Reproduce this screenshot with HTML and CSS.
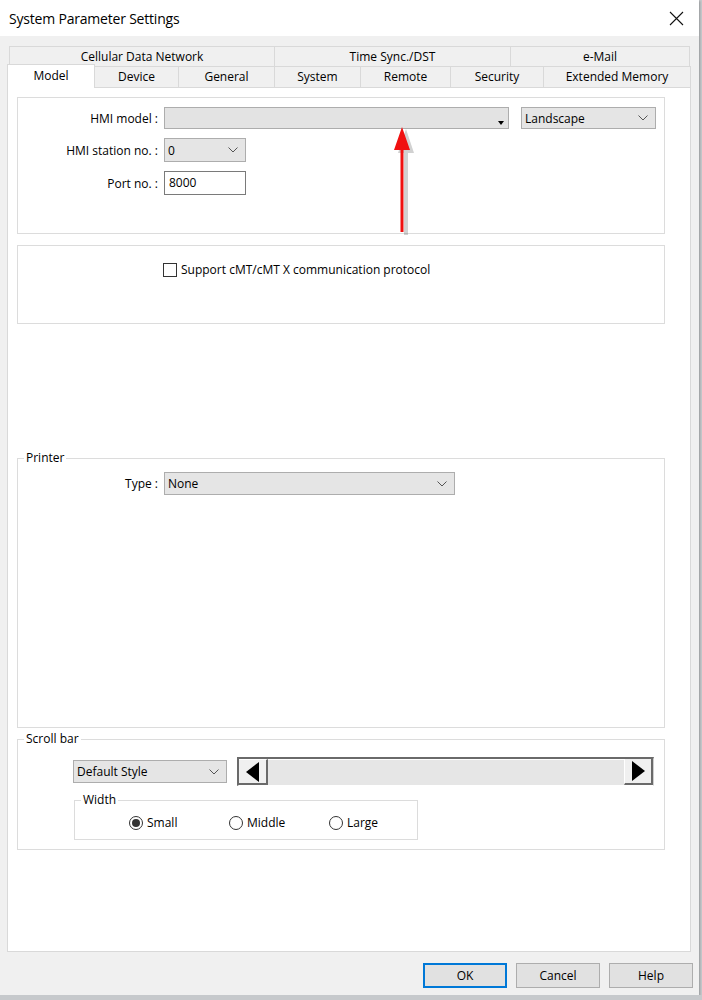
FILE: index.html
```html
<!DOCTYPE html>
<html lang="en">
  <head>
    <meta charset="UTF-8" />
    <meta name="viewport" content="width=device-width, initial-scale=1.0" />
    <title>System Parameter Settings</title>
    <link rel="stylesheet" href="styles.css">
  </head>
  <body>
    <div class="dialog">
      <div class="titlebar">
        <span class="title">System Parameter Settings</span>
        <svg class="close" width="15" height="15" viewBox="0 0 15 15">
          <path d="M1 1 L14 14 M14 1 L1 14" stroke="#111" stroke-width="1.1" fill="none" />
        </svg>
      </div>

      <div class="content">
        <div class="tabs">
          <div class="tab-row back">
            <div class="tab" style="width: 266px">Cellular Data Network</div>
            <div class="tab" style="width: 237px">Time Sync./DST</div>
            <div class="tab" style="width: 180px">e-Mail</div>
          </div>
          <div class="tab-row front">
            <div class="tab active" style="width: 88px">Model</div>
            <div class="tab" style="width: 85px">Device</div>
            <div class="tab" style="width: 97px">General</div>
            <div class="tab" style="width: 87px">System</div>
            <div class="tab" style="width: 91px">Remote</div>
            <div class="tab" style="width: 94px">Security</div>
            <div class="tab" style="width: 148px">Extended Memory</div>
          </div>
        </div>

        <div class="panel">
          <fieldset class="group model-group">
            <div class="form">
              <span class="label">HMI model :</span>
              <div class="field-line">
                <div class="combo model-combo">
                  <svg class="tiny-drop" width="6" height="4" viewBox="0 0 6 4">
                    <path d="M0 0 H6 L3 4 Z" fill="#000" />
                  </svg>
                </div>
                <div class="combo orient-combo">
                  <span>Landscape</span>
                  <svg class="chev" width="10" height="6" viewBox="0 0 10 6">
                    <path d="M0.5 0.5 L5 5 L9.5 0.5" stroke="#555" fill="none" />
                  </svg>
                </div>
              </div>

              <span class="label">HMI station no. :</span>
              <div class="field-line">
                <div class="combo small-combo">
                  <span>0</span>
                  <svg class="chev" width="10" height="6" viewBox="0 0 10 6">
                    <path d="M0.5 0.5 L5 5 L9.5 0.5" stroke="#555" fill="none" />
                  </svg>
                </div>
              </div>

              <span class="label">Port no. :</span>
              <div class="field-line">
                <div class="textbox">8000</div>
              </div>
            </div>
          </fieldset>

          <fieldset class="group protocol-group">
            <label class="check">
              <span class="box"></span>
              <span>Support cMT/cMT X communication protocol</span>
            </label>
          </fieldset>

          <fieldset class="group printer-group">
            <legend>Printer</legend>
            <div class="form">
              <span class="label">Type :</span>
              <div class="field-line">
                <div class="combo type-combo">
                  <span>None</span>
                  <svg class="chev" width="10" height="6" viewBox="0 0 10 6">
                    <path d="M0.5 0.5 L5 5 L9.5 0.5" stroke="#555" fill="none" />
                  </svg>
                </div>
              </div>
            </div>
          </fieldset>

          <fieldset class="group scroll-group">
            <legend>Scroll bar</legend>
            <div class="scroll-body">
              <div class="scroll-line">
                <div class="combo style-combo">
                  <span>Default Style</span>
                  <svg class="chev" width="10" height="6" viewBox="0 0 10 6">
                    <path d="M0.5 0.5 L5 5 L9.5 0.5" stroke="#555" fill="none" />
                  </svg>
                </div>
                <div class="scroll-preview">
                  <div class="arrow-btn left">
                    <svg width="14" height="20" viewBox="0 0 14 20">
                      <path d="M13 0 V20 L0 10 Z" fill="#000" />
                    </svg>
                  </div>
                  <div class="track"></div>
                  <div class="arrow-btn right">
                    <svg width="14" height="20" viewBox="0 0 14 20">
                      <path d="M1 0 V20 L14 10 Z" fill="#000" />
                    </svg>
                  </div>
                </div>
              </div>
              <fieldset class="group width-group">
                <legend>Width</legend>
                <div class="radios">
                  <label class="radio"><span class="dot on"></span>Small</label>
                  <label class="radio"><span class="dot"></span>Middle</label>
                  <label class="radio"><span class="dot"></span>Large</label>
                </div>
              </fieldset>
            </div>
          </fieldset>
        </div>

        <div class="buttons">
          <button class="btn default">OK</button>
          <button class="btn">Cancel</button>
          <button class="btn">Help</button>
        </div>
      </div>

      <!-- annotation arrow -->
      <svg class="pointer" width="26" height="112" viewBox="0 0 26 112">
        <path d="M12 2 L20 26 H14 V108 H10 V26 H4 Z" fill="#000" opacity="0.18" transform="translate(2 2)" />
        <path d="M10 2 L18 25 H11.5 V107 H8.5 V25 H2 Z" fill="#f01010" />
      </svg>
    </div>
  </body>
</html>
```

FILE: styles.css
```css
body {
  margin: 0;
  background-color: #c6c9cc;
  font-family: "Open Sans", "Liberation Sans", sans-serif;
  font-size: 12px;
  color: #000;
}
.dialog {
  position: relative;
  width: 699px;
  height: 995px;
  background-color: #f0f0f0;
  display: flex;
  flex-direction: column;
  box-shadow: 1px 1px 2px rgba(0, 0, 0, 0.25);
}
.titlebar {
  height: 36px;
  flex: 0 0 36px;
  background-color: #fff;
  display: flex;
  align-items: center;
  justify-content: space-between;
  padding: 0 15px 0 9px;
}
.title {
  font-size: 14px;
  letter-spacing: -0.2px;
}
.content {
  padding: 10px 0 0 7px;
}

/* tabs */
.tab-row {
  display: flex;
}
.tab-row.back {
  margin-left: 2px;
  height: 21px;
}
.tab-row.front {
  position: relative;
  z-index: 1;
  height: 24px;
  margin-top: -3px;
  margin-bottom: -1px;
}
.tab {
  box-sizing: border-box;
  height: 21px;
  margin-left: -1px;
  border: 1px solid #d9d9d9;
  background-color: #f0f0f0;
  text-align: center;
  line-height: 20px;
}
.tab:first-child {
  margin-left: 0;
}
.tab-row.front .tab {
  margin-top: 2px;
  border-bottom: none;
}
.tab-row.front .tab.active {
  height: 24px;
  margin-top: 0;
  background-color: #fff;
  line-height: 22px;
}

/* page */
.panel {
  box-sizing: border-box;
  width: 684px;
  height: 865px;
  border: 1px solid #d9d9d9;
  background-color: #fff;
  padding: 9px 25px 0 9px;
}
.group {
  margin: 0;
  padding: 0;
  border: 1px solid #dcdcdc;
  min-width: 0;
}
.group legend {
  margin-left: 6px;
  padding: 0 2px;
  line-height: 14px;
}
.model-group {
  height: 137px;
  box-sizing: border-box;
  padding-top: 9px;
}
.form {
  display: grid;
  grid-template-columns: 140px 1fr;
  column-gap: 6px;
  row-gap: 9px;
  align-items: center;
}
.label {
  text-align: right;
}
.field-line {
  display: flex;
  align-items: center;
  gap: 12px;
}
.combo {
  box-sizing: border-box;
  position: relative;
  height: 23px;
  border: 1px solid #adadad;
  background-color: #e5e5e5;
  display: flex;
  align-items: center;
  justify-content: space-between;
  padding: 0 7px 0 3px;
}
.model-combo {
  width: 345px;
  height: 22px;
  background-color: #e3e3e3;
}
.tiny-drop {
  position: absolute;
  right: 4px;
  bottom: 3px;
}
.orient-combo {
  width: 135px;
  height: 22px;
}
.small-combo {
  width: 82px;
  height: 24px;
}
.textbox {
  box-sizing: border-box;
  width: 82px;
  height: 24px;
  border: 1px solid #7a7a7a;
  background-color: #fff;
  padding-left: 4px;
  line-height: 22px;
}
.protocol-group {
  margin-top: 11px;
  height: 79px;
  box-sizing: border-box;
  padding: 15px 0 0 145px;
}
.check {
  display: flex;
  align-items: center;
  gap: 4px;
}
.box {
  box-sizing: border-box;
  width: 14px;
  height: 14px;
  border: 1px solid #333;
  background-color: #fff;
}
.printer-group {
  margin-top: 127px;
  height: 277px;
  box-sizing: border-box;
  padding-top: 7px;
}
.type-combo {
  width: 291px;
}
.scroll-group {
  margin-top: 4px;
  height: 118px;
  box-sizing: border-box;
}
.scroll-body {
  padding: 11px 0 0 55px;
}
.scroll-line {
  display: flex;
  align-items: center;
  gap: 10px;
}
.style-combo {
  width: 154px;
  height: 23px;
}
.scroll-preview {
  box-sizing: border-box;
  width: 417px;
  height: 29px;
  display: flex;
  border-top: 2px solid #6a6a6a;
  border-left: 2px solid #6a6a6a;
  border-right: 1px solid #cfcfcf;
  border-bottom: 1px solid #fff;
  background-color: #e6e6e6;
}
.arrow-btn {
  box-sizing: border-box;
  width: 29px;
  display: flex;
  align-items: center;
  justify-content: center;
  background-color: #f0f0f0;
}
.arrow-btn.left {
  border-right: 2px solid #6a6a6a;
  border-bottom: 2px solid #6a6a6a;
  border-top: 1px solid #fff;
}
.arrow-btn.right {
  border-left: 1px solid #fff;
  border-right: 2px solid #6a6a6a;
  border-bottom: 2px solid #6a6a6a;
}
.track {
  flex: 1;
  border-top: 1px solid #fff;
}
.width-group {
  margin: 7px 0 0 1px;
  width: 344px;
  height: 47px;
  box-sizing: border-box;
}
.radios {
  display: flex;
  padding: 7px 0 0 54px;
}
.radio {
  flex: 0 0 100px;
  display: flex;
  align-items: center;
  gap: 4px;
}
.dot {
  box-sizing: border-box;
  width: 14px;
  height: 14px;
  border: 1px solid #333;
  border-radius: 50%;
  background-color: #fff;
  display: flex;
  align-items: center;
  justify-content: center;
}
.dot.on::after {
  content: "";
  width: 8px;
  height: 8px;
  border-radius: 50%;
  background-color: #333;
}

/* bottom buttons */
.buttons {
  display: flex;
  justify-content: flex-end;
  gap: 9px;
  margin-top: 11px;
  padding-right: 6px;
}
.btn {
  box-sizing: border-box;
  width: 84px;
  height: 25px;
  border: 1px solid #adadad;
  background-color: #e1e1e1;
  font-family: inherit;
  font-size: 12px;
  color: #000;
  padding: 0;
}
.btn.default {
  border-color: #0078d7;
  box-shadow: inset 0 0 0 1px #0078d7;
}

.pointer {
  position: absolute;
  left: 392px;
  top: 125px;
}
```
